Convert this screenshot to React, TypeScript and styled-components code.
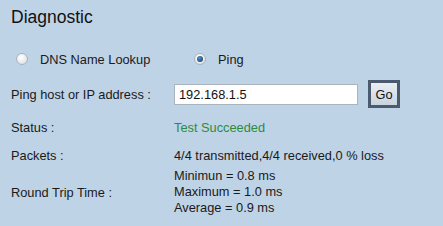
import React from "react";
import styled, { createGlobalStyle } from "styled-components";

const GlobalStyle = createGlobalStyle`
  html, body {
    margin: 0;
    padding: 0;
    background: #bfd3e6;
  }
  body {
    font-family: "Liberation Sans", Arial, sans-serif;
    font-size: 12.8px;
    color: #1a1a1a;
  }
`;

function App() {
  return (
    <Page>
      <GlobalStyle />
      <Title>Diagnostic</Title>
      <RadioRow>
        <RadioLabel $width={178}>
          <Radio />
          DNS Name Lookup
        </RadioLabel>
        <RadioLabel>
          <Radio $checked />
          Ping
        </RadioLabel>
      </RadioRow>
      <Row $top={12} $height={28}>
        <Label>Ping host or IP address :</Label>
        <Value>
          <Input defaultValue="192.168.1.5" />
          <GoButton>Go</GoButton>
        </Value>
      </Row>
      <Row $top={12} $height={14}>
        <Label>Status :</Label>
        <Value>
          <Success>Test Succeeded</Success>
        </Value>
      </Row>
      <Row $top={14} $height={14}>
        <Label>Packets :</Label>
        <Value>4/4 transmitted,4/4 received,0 % loss</Value>
      </Row>
      <Row $top={6} $height={48}>
        <Label>Round Trip Time :</Label>
        <Value>
          <Lines>
            <span>Minimun = 0.8 ms</span>
            <span>Maximum = 1.0 ms</span>
            <span>Average = 0.9 ms</span>
          </Lines>
        </Value>
      </Row>
    </Page>
  );
}

const Page = styled.div`
  width: 443px;
  height: 226px;
  padding: 0 11px;
  box-sizing: border-box;
  background: #bfd3e6;
`;

const Title = styled.h1`
  margin: 0;
  padding-top: 7px;
  height: 20px;
  line-height: 20px;
  font-size: 17.5px;
  font-weight: normal;
  color: #111;
`;

const RadioRow = styled.div`
  display: flex;
  align-items: center;
  margin-top: 23px;
  height: 18px;
  padding-left: 5px;
`;

const RadioLabel = styled.label<{ $width?: number }>`
  display: flex;
  align-items: center;
  gap: 12px;
  width: ${(p) => (p.$width ? `${p.$width}px` : "auto")};
`;

const Radio = styled.span<{ $checked?: boolean }>`
  width: 12px;
  height: 12px;
  border-radius: 50%;
  box-sizing: border-box;
  border: 1px solid #a9b3bc;
  background: radial-gradient(circle at 40% 35%, #ffffff 0%, #e8ecef 55%, #cfd5da 100%);
  display: flex;
  align-items: center;
  justify-content: center;
  &::after {
    content: "";
    display: ${(p) => (p.$checked ? "block" : "none")};
    width: 6px;
    height: 6px;
    border-radius: 50%;
    background: radial-gradient(circle at 40% 35%, #5a8fc4 0%, #1f4f82 70%, #153a62 100%);
  }
`;

const Row = styled.div<{ $top: number; $height: number }>`
  display: grid;
  grid-template-columns: 163px 1fr;
  align-items: center;
  margin-top: ${(p) => p.$top}px;
  height: ${(p) => p.$height}px;
`;

const Label = styled.div`
  white-space: nowrap;
`;

const Value = styled.div`
  display: flex;
  align-items: center;
  gap: 10px;
  white-space: nowrap;
`;

const Input = styled.input`
  width: 184px;
  height: 21px;
  box-sizing: border-box;
  border: 1px solid #aab4be;
  background: #fff;
  padding: 0 4px;
  font-family: "Liberation Sans", Arial, sans-serif;
  font-size: 12.8px;
  color: #111;
  outline: none;
`;

const GoButton = styled.button`
  width: 32px;
  height: 28px;
  box-sizing: border-box;
  border: 3px solid #4b5b6d;
  background: linear-gradient(#e9eef3, #c9d4df);
  font-family: "Liberation Sans", Arial, sans-serif;
  font-size: 12.8px;
  color: #111;
  padding: 0;
`;

const Success = styled.span`
  color: #2e8b3b;
`;

const Lines = styled.div`
  display: flex;
  flex-direction: column;
  line-height: 16px;
`;

export default App;
